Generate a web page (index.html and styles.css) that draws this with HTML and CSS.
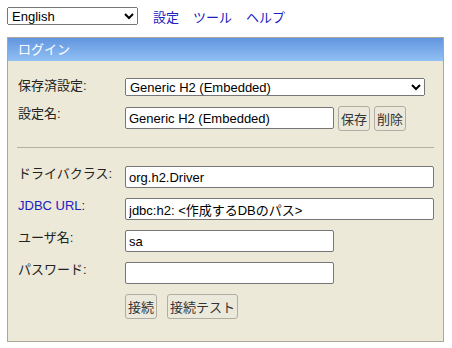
FILE: index.html
```html
<!DOCTYPE html>
<html lang="ja">
<head>
<meta charset="UTF-8">
<title>H2 Console</title>
<link rel="stylesheet" href="styles.css">
</head>
<body>

<div class="toolbar">
  <select class="lang">
    <option>English</option>
    <option>日本語</option>
  </select>
  <a href="#">設定</a>
  <a href="#">ツール</a>
  <a href="#">ヘルプ</a>
</div>

<div class="login">
  <div class="login-head">ログイン</div>
  <div class="login-body">
    <div class="row">
      <label class="caption">保存済設定:</label>
      <select class="saved">
        <option>Generic H2 (Embedded)</option>
      </select>
    </div>
    <div class="row">
      <label class="caption">設定名:</label>
      <input type="text" class="short nudge" value="Generic H2 (Embedded)">
      <button class="btn btn-side">保存</button>
      <button class="btn btn-side">削除</button>
    </div>
    <hr>
    <div class="row">
      <label class="caption">ドライバクラス:</label>
      <input type="text" class="long" value="org.h2.Driver">
    </div>
    <div class="row">
      <span class="caption"><a href="#">JDBC URL</a>:</span>
      <input type="text" class="long" value="jdbc:h2: <作成するDBのパス>">
    </div>
    <div class="row">
      <label class="caption">ユーザ名:</label>
      <input type="text" class="short" value="sa">
    </div>
    <div class="row">
      <label class="caption">パスワード:</label>
      <input type="password" class="short">
    </div>
    <div class="row row-buttons">
      <button class="btn">接続</button>
      <button class="btn">接続テスト</button>
    </div>
  </div>
</div>

</body>
</html>
```
FILE: styles.css
```css
body { margin: 7px; font: 13px "Liberation Sans", Arial, "Noto Sans CJK JP", sans-serif; color: #222; background: #fff; }
a { color: #2020c0; text-decoration: none; }

.toolbar { display: flex; align-items: center; gap: 14px; height: 18px; }
.toolbar .lang { width: 131px; height: 18px; margin-right: 1px; font: 13px "Liberation Sans", Arial, sans-serif; }

.login { width: 437px; box-sizing: border-box; margin-top: 12px; border: 1px solid #aca899; background: #ece9d8; }
.login-head { height: 23px; line-height: 23px; padding-left: 10px; color: #fff; background: linear-gradient(#6195de, #92c0f5); }
.login-body { padding: 17px 9px 22px 10px; }

.row { display: flex; align-items: flex-start; }
.row + .row { margin-top: 10px; }
.row-buttons { padding-left: 107px; gap: 10px; }
.caption { width: 107px; flex: none; line-height: 16px; }

.saved { width: 300px; height: 18px; font: 13px "Liberation Sans", Arial, sans-serif; }
input { box-sizing: border-box; height: 22px; padding: 1px 3px; border: 1px solid #767676; border-radius: 2px; font: 13px "Liberation Sans", Arial, "Noto Sans CJK JP", sans-serif; color: #000; }
input.short { width: 209px; }
input.long { width: 309px; }
input.nudge { margin-top: 1px; }

.btn { height: 25px; padding: 0 2px; border: 1px solid #b1ada0; border-radius: 3px; background: #ebe8dc; color: #333; font: 13px "Noto Sans CJK JP", sans-serif; }
.btn-side { margin-left: 4px; }

hr { margin: 16px 0 18px -1px; border: none; border-top: 1px solid #b3b0a3; }
```
